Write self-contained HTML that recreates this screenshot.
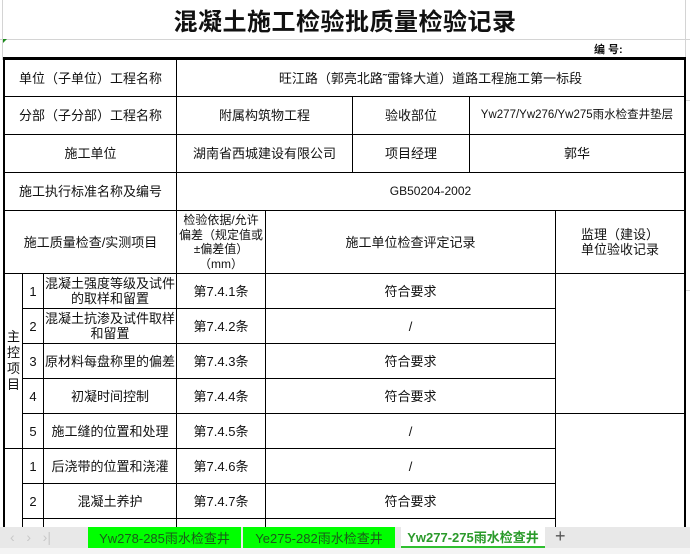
<!DOCTYPE html>
<html><head><meta charset="utf-8"><style>
*{margin:0;padding:0;box-sizing:border-box}
body{width:690px;height:554px;overflow:hidden;background:#fff;position:relative;font-family:"Liberation Sans","Noto Sans CJK SC",sans-serif;color:#111}
.c{position:absolute;display:flex;align-items:center;justify-content:center;text-align:center;font-size:13px;line-height:15px}
.h{position:absolute;background:#000}
.g{position:absolute;background:#d4d4d4}
.tab{position:absolute;top:527px;height:21px;display:flex;align-items:center;justify-content:center;font-size:13px;color:#1a5a1a}
</style></head><body>
<div class="g" style="left:0;top:39px;width:690px;height:1px"></div>
<div class="g" style="left:685px;top:0;width:1px;height:527px"></div>
<div class="g" style="left:2px;top:0;width:1px;height:60px"></div>
<div class="g" style="left:686px;top:100px;width:4px;height:1px"></div>
<div class="g" style="left:686px;top:290px;width:4px;height:1px"></div>
<div style="position:absolute;left:0;top:0;width:690px;height:39px;display:flex;align-items:center;justify-content:center;font-size:24px;font-weight:bold;letter-spacing:0.5px">混凝土施工检验批质量检验记录</div>
<div style="position:absolute;left:3px;top:39px;width:0;height:0;border-top:4px solid #1a8a1a;border-right:4px solid transparent"></div>
<div style="position:absolute;left:594px;top:41px;font-size:11px;font-weight:bold">编 号:</div>

<!-- borders -->
<div class="h" style="left:3px;top:57px;width:683px;height:3px"></div>
<div class="h" style="left:3px;top:57px;width:2px;height:470px"></div>
<div class="h" style="left:684px;top:57px;width:2px;height:470px"></div>
<div class="h" style="left:3px;top:96px;width:683px;height:1px"></div>
<div class="h" style="left:3px;top:134px;width:683px;height:1px"></div>
<div class="h" style="left:3px;top:172px;width:683px;height:1px"></div>
<div class="h" style="left:3px;top:210px;width:683px;height:1px"></div>
<div class="h" style="left:3px;top:273px;width:683px;height:1px"></div>
<div class="h" style="left:176px;top:57px;width:1px;height:470px"></div>
<div class="h" style="left:352px;top:96px;width:1px;height:77px"></div>
<div class="h" style="left:469px;top:96px;width:1px;height:77px"></div>
<div class="h" style="left:265px;top:210px;width:1px;height:317px"></div>
<div class="h" style="left:555px;top:210px;width:1px;height:317px"></div>
<div class="h" style="left:22px;top:273px;width:1px;height:254px"></div>
<div class="h" style="left:43px;top:273px;width:1px;height:254px"></div>
<div class="h" style="left:22px;top:308px;width:534px;height:1px"></div>
<div class="h" style="left:22px;top:343px;width:534px;height:1px"></div>
<div class="h" style="left:22px;top:378px;width:534px;height:1px"></div>
<div class="h" style="left:22px;top:413px;width:664px;height:1px"></div>
<div class="h" style="left:3px;top:448px;width:553px;height:1px"></div>
<div class="h" style="left:22px;top:483px;width:534px;height:1px"></div>
<div class="h" style="left:22px;top:518px;width:534px;height:1px"></div>

<!-- top rows -->
<div class="c" style="left:5px;top:60px;width:171px;height:36px">单位（子单位）工程名称</div>
<div class="c" style="left:177px;top:60px;width:507px;height:36px">旺江路（郭亮北路˜雷锋大道）道路工程施工第一标段</div>
<div class="c" style="left:5px;top:97px;width:171px;height:37px">分部（子分部）工程名称</div>
<div class="c" style="left:177px;top:97px;width:175px;height:37px">附属构筑物工程</div>
<div class="c" style="left:353px;top:97px;width:116px;height:37px">验收部位</div>
<div class="c" style="left:470px;top:97px;width:214px;height:37px;font-size:11.5px;white-space:nowrap">Yw277/Yw276/Yw275雨水检查井垫层</div>
<div class="c" style="left:5px;top:135px;width:171px;height:37px">施工单位</div>
<div class="c" style="left:177px;top:135px;width:175px;height:37px">湖南省西城建设有限公司</div>
<div class="c" style="left:353px;top:135px;width:116px;height:37px">项目经理</div>
<div class="c" style="left:470px;top:135px;width:214px;height:37px">郭华</div>
<div class="c" style="left:5px;top:173px;width:171px;height:37px">施工执行标准名称及编号</div>
<div class="c" style="left:177px;top:173px;width:507px;height:37px;font-size:12px">GB50204-2002</div>
<div class="c" style="left:5px;top:211px;width:171px;height:62px">施工质量检查/实测项目</div>
<div class="c" style="left:177px;top:211px;width:88px;height:62px;font-size:12px;line-height:14.5px">检验依据/允许<br>偏差（规定值或<br>±偏差值）<br>（mm）</div>
<div class="c" style="left:266px;top:211px;width:289px;height:62px">施工单位检查评定记录</div>
<div class="c" style="left:556px;top:211px;width:128px;height:62px">监理（建设）<br>单位验收记录</div>

<!-- body -->
<div class="c" style="left:5px;top:274px;width:17px;height:174px;line-height:16px">主<br>控<br>项<br>目</div>
<div class="c" style="left:23px;top:274px;width:20px;height:34px">1</div>
<div class="c" style="left:44px;top:274px;width:132px;height:34px">混凝土强度等级及试件<br>的取样和留置</div>
<div class="c" style="left:23px;top:309px;width:20px;height:34px">2</div>
<div class="c" style="left:44px;top:309px;width:132px;height:34px">混凝土抗渗及试件取样<br>和留置</div>
<div class="c" style="left:23px;top:344px;width:20px;height:34px">3</div>
<div class="c" style="left:44px;top:344px;width:132px;height:34px">原材料每盘称里的偏差</div>
<div class="c" style="left:23px;top:379px;width:20px;height:34px">4</div>
<div class="c" style="left:44px;top:379px;width:132px;height:34px">初凝时间控制</div>
<div class="c" style="left:23px;top:414px;width:20px;height:34px">5</div>
<div class="c" style="left:44px;top:414px;width:132px;height:34px">施工缝的位置和处理</div>
<div class="c" style="left:23px;top:449px;width:20px;height:34px">1</div>
<div class="c" style="left:44px;top:449px;width:132px;height:34px">后浇带的位置和浇灌</div>
<div class="c" style="left:23px;top:484px;width:20px;height:34px">2</div>
<div class="c" style="left:44px;top:484px;width:132px;height:34px">混凝土养护</div>

<div class="c" style="left:177px;top:274px;width:88px;height:34px">第7.4.1条</div>
<div class="c" style="left:177px;top:309px;width:88px;height:34px">第7.4.2条</div>
<div class="c" style="left:177px;top:344px;width:88px;height:34px">第7.4.3条</div>
<div class="c" style="left:177px;top:379px;width:88px;height:34px">第7.4.4条</div>
<div class="c" style="left:177px;top:414px;width:88px;height:34px">第7.4.5条</div>
<div class="c" style="left:177px;top:449px;width:88px;height:34px">第7.4.6条</div>
<div class="c" style="left:177px;top:484px;width:88px;height:34px">第7.4.7条</div>
<div class="c" style="left:266px;top:274px;width:289px;height:34px">符合要求</div>
<div class="c" style="left:266px;top:309px;width:289px;height:34px">/</div>
<div class="c" style="left:266px;top:344px;width:289px;height:34px">符合要求</div>
<div class="c" style="left:266px;top:379px;width:289px;height:34px">符合要求</div>
<div class="c" style="left:266px;top:414px;width:289px;height:34px">/</div>
<div class="c" style="left:266px;top:449px;width:289px;height:34px">/</div>
<div class="c" style="left:266px;top:484px;width:289px;height:34px">符合要求</div>

<!-- tab bar -->
<div style="position:absolute;left:0;top:527px;width:690px;height:21px;background:#e8e8e8"></div>
<div style="position:absolute;left:0;top:548px;width:690px;height:6px;background:#f4f4f4"></div>
<div style="position:absolute;left:10px;top:529px;font-size:14px;color:#c8c8c8">‹&nbsp;&nbsp;&nbsp;›&nbsp;&nbsp;&nbsp;›|</div>
<div class="tab" style="left:88px;width:153px;background:#00ff00">Yw278-285雨水检查井</div>
<div class="tab" style="left:243px;width:152px;background:#00ff00">Ye275-282雨水检查井</div>
<div class="tab" style="left:401px;width:144px;background:#fff;color:#2a9a2a;font-weight:bold;border-bottom:2px solid #2fbf2f">Yw277-275雨水检查井</div>
<div style="position:absolute;left:555px;top:526px;font-size:18px;color:#555">+</div>
</body></html>
